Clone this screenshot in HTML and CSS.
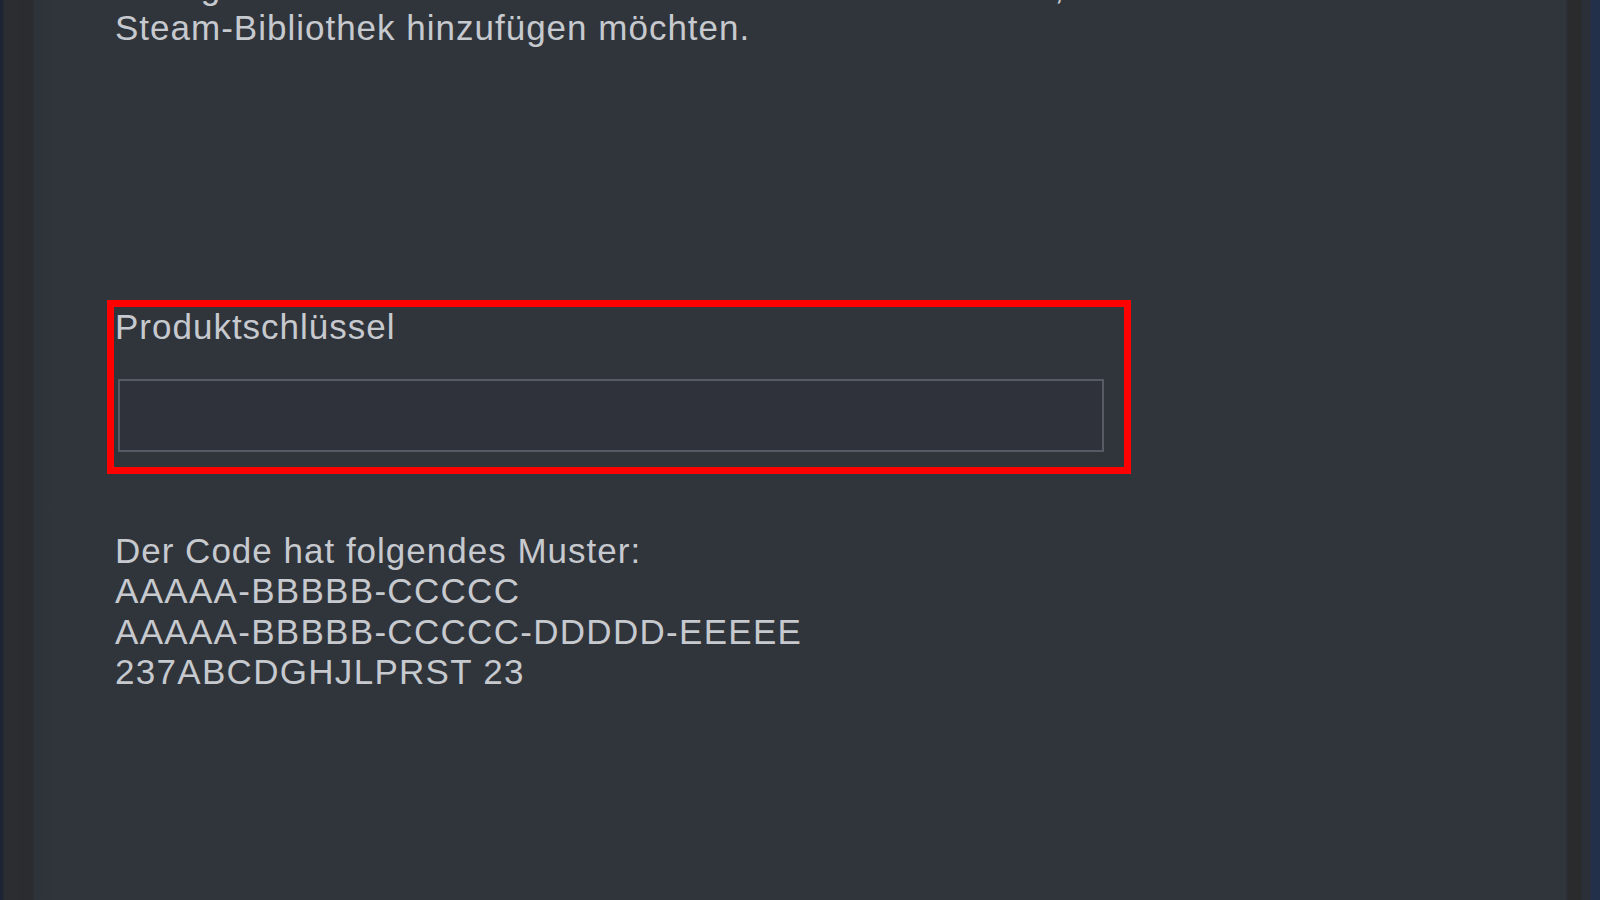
FILE: index.html
```html
<!DOCTYPE html>
<html lang="de">
<head>
    <meta charset="UTF-8">
    <title>Produkt aktivieren</title>
    <link rel="stylesheet" href="styles.css">
</head>
<body>
<div class="window">
    <div class="edge edge-left"></div>
    <div class="panel">
        <div class="intro">
            Bitte geben Sie den Produktschlüssel für das Produkt ein, das Sie Ihrer<br>
            Steam-Bibliothek hinzufügen möchten.
        </div>

        <div class="key-field">
            <label class="key-label" for="productKey">Produktschlüssel</label>
            <input class="key-input" type="text" id="productKey" name="productKey">
        </div>

        <div class="pattern">
            Der Code hat folgendes Muster:<br>
            <span class="code">AAAAA-BBBBB-CCCCC</span><br>
            <span class="code">AAAAA-BBBBB-CCCCC-DDDDD-EEEEE</span><br>
            <span class="code">237ABCDGHJLPRST 23</span>
        </div>
    </div>
    <div class="edge edge-right"></div>
</div>
</body>
</html>
```

FILE: styles.css
```css
body, html {
    margin: 0;
    padding: 0;
    height: 100%;
}
body {
    background: #30343b;
    font-family: "Liberation Sans", Arial, sans-serif;
    color: #c6c9ce;
    overflow: hidden;
}
.window {
    display: flex;
    height: 900px;
}
.edge {
    flex: 0 0 auto;
}
.edge-left {
    width: 34px;
    background: linear-gradient(to right, #1b2334 0, #1f2532 3px, #2b2d31 4px, #2b2d31 18px, #2a2c2f 19px, #2a2c2f 33px, #2e333a 34px);
}
.edge-right {
    width: 34px;
    background: linear-gradient(to right, #2e3139 0, #2a2b2d 2px, #2a2b2d 15px, #2b2f37 16px, #2b2f37 24px, #243049 25px, #22304b 34px);
}
.panel {
    flex: 1;
    background: linear-gradient(to right, #2e333a 0, #30343b 22px);
    padding-left: 73px;
    font-size: 35px;
    letter-spacing: 1px;
    line-height: 40.5px;
}
.intro {
    margin-top: -33px;
    margin-left: 8px;
}

/* rot markiertes Eingabefeld */
.key-field {
    margin-top: 252px;
    width: 1024px;
    box-sizing: border-box;
    border: 7px solid #ff0000;
    padding: 0 20px 15px 0;
}
.key-label {
    display: block;
    margin-left: 1px;
}
.key-input {
    display: block;
    margin: 31px 0 0 4px;
    width: 986px;
    height: 73px;
    box-sizing: border-box;
    border: 2px solid #575c64;
    background: #2f323a;
    outline: none;
}

.pattern {
    margin-top: 57px;
    margin-left: 8px;
}
.code {
    letter-spacing: 1.3px;
}
```
